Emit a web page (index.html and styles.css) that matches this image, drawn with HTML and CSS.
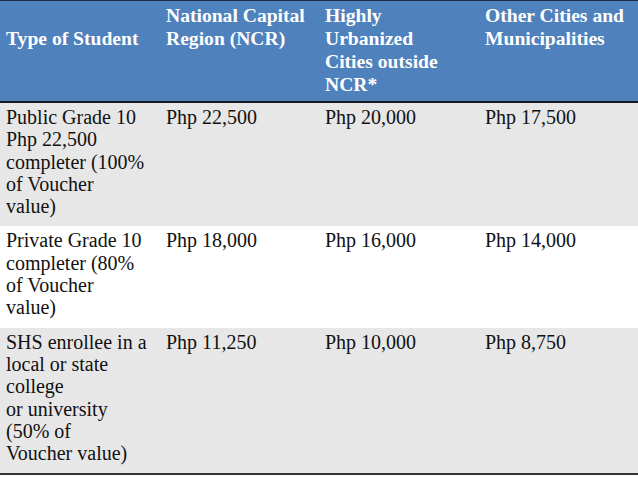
FILE: index.html
```html
<!DOCTYPE html>
<html>
<head>
<meta charset="utf-8">
<link rel="stylesheet" href="styles.css">
</head>
<body>
<table class="voucher">
  <colgroup>
    <col class="c1"><col class="c2"><col class="c3"><col class="c4">
  </colgroup>
  <thead>
    <tr>
      <th class="first">Type of Student</th>
      <th>National Capital<br>Region (NCR)</th>
      <th>Highly<br>Urbanized<br>Cities outside<br>NCR*</th>
      <th>Other Cities and<br>Municipalities</th>
    </tr>
  </thead>
  <tbody>
    <tr class="shade r1">
      <td>Public Grade 10<br>Php 22,500<br>completer (100%<br>of Voucher<br>value)</td>
      <td>Php 22,500</td>
      <td>Php 20,000</td>
      <td>Php 17,500</td>
    </tr>
    <tr class="plain r2">
      <td>Private Grade 10<br>completer (80%<br>of Voucher<br>value)</td>
      <td>Php 18,000</td>
      <td>Php 16,000</td>
      <td>Php 14,000</td>
    </tr>
    <tr class="shade r3">
      <td>SHS enrollee in a<br>local or state<br>college<br>or university<br>(50% of<br>Voucher value)</td>
      <td>Php 11,250</td>
      <td>Php 10,000</td>
      <td>Php 8,750</td>
    </tr>
  </tbody>
</table>
</body>
</html>
```

FILE: styles.css
```css
html, body {
  margin: 0;
  padding: 0;
  background: #ffffff;
}

.voucher {
  width: 638px;
  border-collapse: collapse;
  table-layout: fixed;
  font-family: "Liberation Serif", "DejaVu Serif", serif;
  font-size: 20px;
  line-height: 22.3px;
  color: #111111;
}

.c1 { width: 160px; }
.c2 { width: 159px; }
.c3 { width: 160px; }
.c4 { width: 159px; }

.voucher th {
  background: #4f81bd;
  color: #ffffff;
  font-weight: bold;
  font-size: 19.6px;
  text-align: left;
  vertical-align: top;
  line-height: 23px;
  padding: 3px 2px 5px 6px;
  border-top: 1px solid #1c2f4f;
  border-bottom: 2px solid #1a1a22;
}

.voucher th.first {
  padding-top: 26px;
}

.voucher td {
  vertical-align: top;
  text-align: left;
  padding: 3px 2px 9px 6px;
}

.voucher tbody tr.r1 td {
  border-top: 1px solid #ffffff;
}

.shade td { background: #e7e7e7; }
.plain td { background: #ffffff; }

.voucher tbody tr.r3 td {
  border-bottom: 2px solid #333333;
}
```
